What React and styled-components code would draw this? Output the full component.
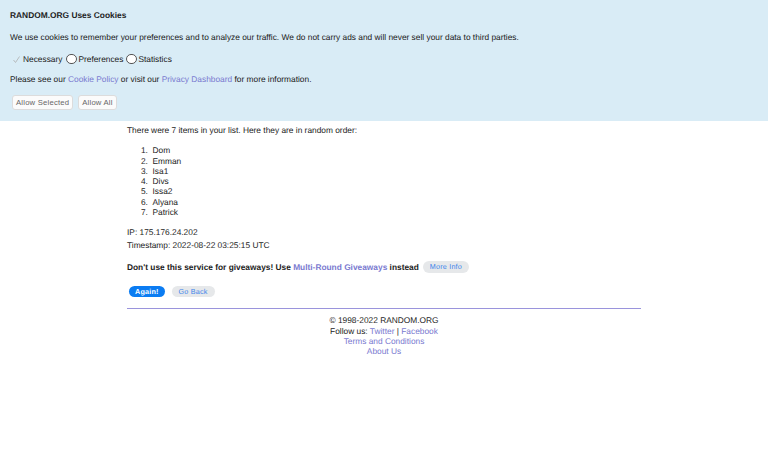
import React from "react";
import styled, { createGlobalStyle } from "styled-components";

const Global = createGlobalStyle`
  html, body { margin: 0; padding: 0; background: #fff; }
  body { font-family: "Liberation Sans", Arial, sans-serif; font-size: 8.35px; color: #1c1c1c; text-rendering: geometricPrecision; }
`;
const Page = styled.div`width: 768px; height: 467px; overflow: hidden; display: flex; flex-direction: column;`;
const Banner = styled.section`
  height: 121px; box-sizing: border-box; background: #d9ecf6; padding: 10px 10px 0;
  color: #222;
`;
const BannerTitle = styled.h1`margin: 0; font-size: 8.4px; line-height: 10px; font-weight: bold;`;
const BannerText = styled.p`margin: ${p => p.$top}px 0 0; font-size: 8.35px; line-height: 10px;`;
const Consent = styled.div`display: flex; align-items: center; height: 12px; margin-top: 11px; font-size: 8.35px;`;
const Check = styled.span`
  width: ${p => (p.$plain ? 9 : 11)}px; height: ${p => (p.$plain ? 9 : 10)}px; display: inline-flex; align-items: center; justify-content: center;
  box-sizing: border-box; margin: ${p => p.$margin};
  border-radius: 5px; border: ${p => (p.$plain ? "none" : "1px solid #555")};
  background: ${p => (p.$plain ? "transparent" : "#fff")};
`;
const Label = styled.span`margin-right: ${p => p.$right || 0}px;`;
const Link = styled.a`color: #7a7ad0; text-decoration: none;`;
const Buttons = styled.div`display: flex; gap: 5px; margin: 11px 0 0 2px;`;
const CookieButton = styled.button`
  height: 15px; padding: 0 3px; border: 1px solid #dcdcdc; border-radius: 3px; background: #fbfbfb;
  font: 7.7px "Liberation Sans", Arial, sans-serif; letter-spacing: .2px; color: #666;
`;
const Main = styled.main`
  width: 514px; margin-left: 127px; padding-top: 4px; display: flex; flex-direction: column;
`;
const Para = styled.p`margin: ${p => p.$top || 0}px 0 0; line-height: 10.3px;`;
const List = styled.ol`margin: 10px 0 0; padding: 0 0 0 25.5px; line-height: 10.3px;
  li::marker { content: counter(list-item) ".\\00a0\\00a0"; }
`;
const Notice = styled.div`display: flex; align-items: center; gap: 4px; margin-top: 10.5px; height: 12px; font-weight: bold;`;
const Pill = styled.span`
  display: inline-flex; align-items: center; justify-content: center;
  height: 11.5px; padding: 0 ${p => p.$pad}px; border-radius: 6px; font-size: 7.2px; letter-spacing: .2px;
  font-weight: ${p => (p.$primary ? "bold" : "normal")};
  background: ${p => (p.$primary ? "#0b7cf2" : "#e6e8ea")};
  color: ${p => (p.$primary ? "#fff" : "#3f86ea")};
`;
const Actions = styled.div`display: flex; gap: 7px; margin: 13px 0 0 2px;`;
const Rule = styled.hr`width: 100%; margin: 11px 0 0; border: 0; border-top: 1px solid #9a94dc;`;
const Footer = styled.footer`margin-top: 6px; text-align: center; line-height: 10.3px;`;

const items = ["Dom", "Emman", "Isa1", "Divs", "Issa2", "Alyana", "Patrick"];

export default function App() {
  return (
    <Page>
      <Global />
      <Banner>
        <BannerTitle>RANDOM.ORG Uses Cookies</BannerTitle>
        <BannerText $top={12}>We use cookies to remember your preferences and to analyze our traffic. We do not carry ads and will never sell your data to third parties.</BannerText>
        <Consent>
          <Check $plain $margin="0 2px 0 2px">
            <svg width="9" height="9" viewBox="0 0 9 9"><path d="M1.5 5 L3.5 7.5 L7.5 1.5" fill="none" stroke="#b8bcbe" strokeWidth="1" /></svg>
          </Check>
          <Label $right={4}>Necessary</Label>
          <Check $margin="0 1px 0 0" />
          <Label $right={3}>Preferences</Label>
          <Check $margin="0 1px 0 0" />
          <Label>Statistics</Label>
        </Consent>
        <BannerText $top={9}>Please see our <Link href="#">Cookie Policy</Link> or visit our <Link href="#">Privacy Dashboard</Link> for more information.</BannerText>
        <Buttons>
          <CookieButton>Allow Selected</CookieButton>
          <CookieButton>Allow All</CookieButton>
        </Buttons>
      </Banner>
      <Main>
        <Para>There were 7 items in your list. Here they are in random order:</Para>
        <List>{items.map(i => <li key={i}>{i}</li>)}</List>
        <Para $top={10}>IP: 175.176.24.202</Para>
        <Para $top={2.5}>Timestamp: 2022-08-22 03:25:15 UTC</Para>
        <Notice>
          <span>Don't use this service for giveaways! Use <Link href="#">Multi-Round Giveaways</Link> instead</span>
          <Pill $pad={7}>More Info</Pill>
        </Notice>
        <Actions>
          <Pill $primary $pad={6}>Again!</Pill>
          <Pill $pad={7}>Go Back</Pill>
        </Actions>
        <Rule />
        <Footer>
          <div>© 1998-2022 RANDOM.ORG</div>
          <div>Follow us: <Link href="#">Twitter</Link> | <Link href="#">Facebook</Link></div>
          <div><Link href="#">Terms and Conditions</Link></div>
          <div><Link href="#">About Us</Link></div>
        </Footer>
      </Main>
    </Page>
  );
}
